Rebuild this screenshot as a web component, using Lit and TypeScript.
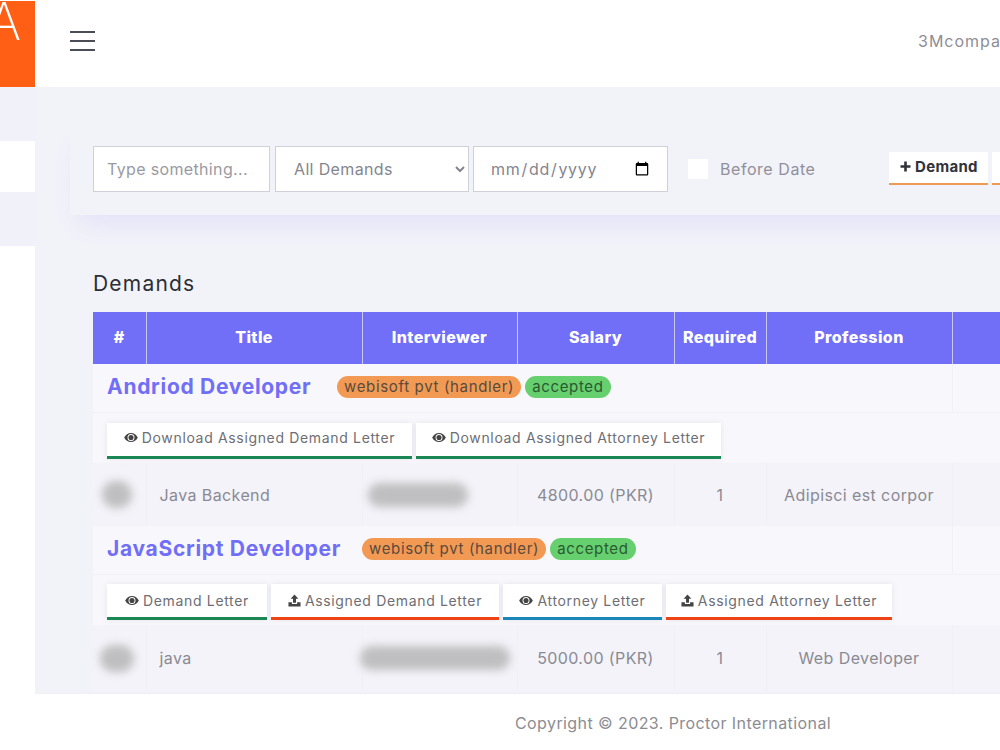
import { LitElement, html, css } from "lit";
import { customElement } from "lit/decorators.js";

const eye = html`<svg class="ic" viewBox="0 0 16 12" width="14" height="11"><path fill="#444" d="M8 .8C4.6.8 1.700 2.800.2 6c1.500 3.200 4.400 5.200 7.800 5.200s6.300-2 7.800-5.200C14.300 2.800 11.400.8 8 .8zm0 9.200a4 4 0 1 1 0-8 4 4 0 0 1 0 8z"/><circle fill="#444" cx="8" cy="6" r="2.900"/></svg>`;
const upload = html`<svg class="ic" viewBox="0 0 14 14" width="13" height="13"><path fill="#444" d="M7 .5 11.200 5H8.600v4.500H5.400V5H2.800zM.5 9h3.700v1.700h5.600V9h3.700v4.500H.5z"/></svg>`;
const plus = html`<svg class="ic" viewBox="0 0 11 11" width="11" height="11"><path fill="#30333a" d="M4.200.5h2.600v3.700h3.700v2.600H6.800v3.700H4.200V6.800H.5V4.200h3.700z"/></svg>`;

type Btn = { icon: "eye" | "up"; text: string; color: string; width: number };
type Blob = { left: number; width: number };
type Row = {
  title: string; titleWidth: number; tags: [string, string]; buttons: Btn[];
  blob1: Blob; blob2: Blob; name: string; salary: string; required: string; profession: string;
};

const rows: Row[] = [
  {
    title: "Andriod Developer", titleWidth: 206, tags: ["webisoft pvt (handler)", "accepted"],
    buttons: [
      { icon: "eye", text: "Download Assigned Demand Letter", color: "#1a8754", width: 305 },
      { icon: "eye", text: "Download Assigned Attorney Letter", color: "#1a8754", width: 305 },
    ],
    blob1: { left: 9, width: 30 }, blob2: { left: 5, width: 100 },
    name: "Java Backend", salary: "4800.00 (PKR)", required: "1", profession: "Adipisci est corpor",
  },
  {
    title: "JavaScript Developer", titleWidth: 231, tags: ["webisoft pvt (handler)", "accepted"],
    buttons: [
      { icon: "eye", text: "Demand Letter", color: "#1a8754", width: 160 },
      { icon: "up", text: "Assigned Demand Letter", color: "#ee4415", width: 228 },
      { icon: "eye", text: "Attorney Letter", color: "#1b87b8", width: 159 },
      { icon: "up", text: "Assigned Attorney Letter", color: "#ee4415", width: 226 },
    ],
    blob1: { left: 7, width: 34 }, blob2: { left: -3, width: 150 },
    name: "java", salary: "5000.00 (PKR)", required: "1", profession: "Web Developer",
  },
];

@customElement("app-root")
export class AppRoot extends LitElement {
  static styles = css`
    :host { display: flex; width: 1000px; height: 750px; overflow: hidden; background: #fff;
      font-family: Inter, "Liberation Sans", sans-serif; color: #8a8a93; }
    .side { width: 35px; flex: none; display: flex; flex-direction: column; overflow: hidden; }
    .logo { margin-top: 1px; height: 86px; background: #ff5f14; color: #fff; font-size: 52px; font-weight: 200;
      line-height: 52px; display: flex; justify-content: flex-end; padding-right: 14px; overflow: hidden; box-sizing: border-box; }
    .logo span { display: block; margin-top: -5px; }
    .s1 { height: 54px; background: #f1f1f9; }
    .s2 { height: 51px; background: #fff; }
    .s3 { height: 54px; background: #f1f1f9; }
    .main { flex: 1; min-width: 0; display: flex; flex-direction: column; }
    .top { height: 87px; flex: none; box-sizing: border-box; padding-bottom: 6px; display: flex; align-items: center; justify-content: space-between; background: #fff; }
    .burger { margin-left: 35px; width: 25px; display: flex; flex-direction: column; gap: 7px; }
    .burger i { display: block; height: 2px; background: #4a4d55; }
    .user { font-size: 16px; letter-spacing: 1px; white-space: nowrap; width: 82px; overflow: hidden; color: #8e8e96; }
    .content { flex: 1; min-height: 0; background: #f2f2f9; overflow: hidden; padding: 33px 0 0 35px; }
    .filter { box-sizing: border-box; display: flex; align-items: center; height: 95px; margin-right: -40px; padding: 3px 0 0 23px; background: #f2f2f9;
      box-shadow: 0 16px 24px -10px rgba(115,110,247,.14); }
    .field { flex: none; box-sizing: border-box; height: 46px; border: 1px solid #cfd0d8; background: #fff; font: 16px Inter, sans-serif;
      letter-spacing: .35px; color: #85858e; padding: 0 13px; border-radius: 0; outline: none; }
    .field::placeholder { color: #9a9aa2; }
    .search { width: 177px; }
    .sel { width: 194px; margin-left: 5px; padding: 0 0 0 14px; }
    .date { width: 195px; margin-left: 4px; padding: 0 15px 0 16px; letter-spacing: .7px; }
    .check { flex: none; width: 20px; height: 20px; background: #fff; margin-left: 20px; }
    .lbl { flex: none; margin-left: 12px; font-size: 16px; letter-spacing: .55px; color: #90909a; white-space: nowrap; }
    .act { flex: none; box-sizing: border-box; height: 33px; background: #fff; border-bottom: 2px solid #ee9a55; display: flex; align-items: center;
      justify-content: center; gap: 4px; padding-bottom: 3px; font-size: 15px; font-weight: 700; letter-spacing: .3px; color: #30333a; margin-top: -1px; white-space: nowrap; }
    .act.a1 { margin-left: 74px; width: 99px; }
    .act.a2 { margin-left: 4px; width: 60px; }
    h2 { margin: 56px 0 0 23px; font-size: 21px; line-height: 26px; font-weight: 400; color: #2b2e35; letter-spacing: 1.2px; }
    table { margin: 15px 0 0 23px; border-collapse: collapse; table-layout: fixed; width: 1010px; }
    th { height: 50px; padding: 0 0 2px; background: #716ef7; color: #fff; font-size: 16px; font-weight: 800; border-left: 1px solid #c9c8fb; letter-spacing: .4px; }
    th:first-child { border-left: 0; }
    td { padding: 0; }
    .group td { height: 48px; background: #f8f8fc; border-bottom: 1px solid #f1f1f7; vertical-align: middle; }
    .group td + td { border-left: 1px solid #f1f1f7; }
    .ginner { display: flex; align-items: center; padding: 0 0 3px 14px; }
    .gt { font-size: 21px; font-weight: 700; color: #716ef7; letter-spacing: .7px; margin-right: 24px; white-space: nowrap; flex: none; }
    .tag { height: 22px; line-height: 22px; border-radius: 11px; padding: 0 7px; font-size: 15px; letter-spacing: .66px; color: #5a4a3c; white-space: nowrap; }
    .tag.o { background: #f29a54; }
    .tag.g { background: #66cf6e; color: #2a5a33; margin-left: 4px; }
    .btns td { height: 50px; background: #f8f8fc; vertical-align: top; }
    .binner { display: flex; gap: 4px; padding: 10px 0 0 14px; }
    .r1 .binner { padding-top: 9px; }
    .btn { flex: none; box-sizing: border-box; height: 36px; padding-bottom: 4px; background: #fff; display: flex; align-items: center; justify-content: center; gap: 4px;
      border-bottom: 3px solid; font-size: 14px; letter-spacing: .66px; color: #6e6e74; white-space: nowrap;
      box-shadow: 0 0 6px rgba(40,40,80,.1); }
    .r1 .btn { padding-bottom: 1px; }
    .ic { flex: none; }
    .data td { height: 63px; background: #f3f3f9; font-size: 16px; letter-spacing: .4px; text-align: center; border-left: 1px solid #f0f0f6; color: #8a8a93; }
    .data.r1 td { height: 66px; }
    .data td:first-child { border-left: 0; }
    .data td.l { text-align: left; padding-left: 13px; }
    .blob { display: block; background: #bfbfc1; border-radius: 14px; filter: blur(4px); }
    .b1 { height: 27px; }
    .b2 { height: 24px; }
    .foot { height: 57px; flex: none; box-sizing: border-box; background: #fff; padding: 19px 0 0 480px; font-size: 16px; letter-spacing: .41px;
      color: #8c8c92; border-top: 1px solid #f0f0f4; white-space: nowrap; }
  `;

  private row(r: Row, i: number) {
    return html`
      <tr class="group r${i}">
        <td colspan="6"><div class="ginner"><span class="gt" style="width:${r.titleWidth}px">${r.title}</span>
          <span class="tag o">${r.tags[0]}</span><span class="tag g">${r.tags[1]}</span></div></td>
        <td></td>
      </tr>
      <tr class="btns r${i}"><td colspan="7"><div class="binner">
        ${r.buttons.map((b) => html`<div class="btn" style="border-bottom-color:${b.color};width:${b.width}px">${b.icon === "eye" ? eye : upload}<span>${b.text}</span></div>`)}
      </div></td></tr>
      <tr class="data r${i}">
        <td><span class="blob b1" style="width:${r.blob1.width}px;margin-left:${r.blob1.left}px"></span></td>
        <td class="l">${r.name}</td>
        <td><span class="blob b2" style="width:${r.blob2.width}px;margin-left:${r.blob2.left}px"></span></td>
        <td>${r.salary}</td><td>${r.required}</td><td>${r.profession}</td><td></td>
      </tr>`;
  }

  render() {
    return html`
      <aside class="side">
        <div class="logo"><span>A</span></div>
        <div class="s1"></div><div class="s2"></div><div class="s3"></div>
      </aside>
      <div class="main">
        <header class="top">
          <div class="burger"><i></i><i></i><i></i></div>
          <div class="user">3Mcompany</div>
        </header>
        <section class="content">
          <div class="filter">
            <input class="field search" placeholder="Type something..." />
            <select class="field sel"><option>All Demands</option></select>
            <input class="field date" type="date" />
            <span class="check"></span>
            <span class="lbl">Before Date</span>
            <div class="act a1">${plus}<span>Demand</span></div>
            <div class="act a2"></div>
          </div>
          <h2>Demands</h2>
          <table>
            <colgroup><col style="width:53px"/><col style="width:216px"/><col style="width:155px"/><col style="width:157px"/><col style="width:92px"/><col style="width:186px"/><col style="width:151px"/></colgroup>
            <thead><tr><th>#</th><th>Title</th><th>Interviewer</th><th>Salary</th><th>Required</th><th>Profession</th><th></th></tr></thead>
            <tbody>${rows.map((r, i) => this.row(r, i))}</tbody>
          </table>
        </section>
        <footer class="foot">Copyright © 2023. Proctor International</footer>
      </div>`;
  }
}
